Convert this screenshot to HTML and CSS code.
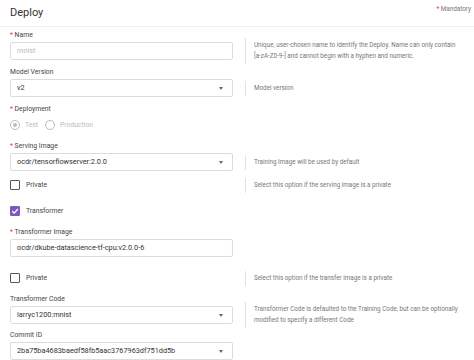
FILE: index.html
```html
<!DOCTYPE html>
<html lang="en">
<head>
  <meta charset="UTF-8">
  <title>Deploy</title>
  <link rel="stylesheet" href="styles.css">
</head>
<body>

<div class="header">
  <h1>Deploy</h1>
  <span class="mandatory"><span class="req">*</span> Mandatory</span>
</div>

<div class="form">

  <!-- Name -->
  <div class="field first">
    <label><span class="req">*</span> Name</label>
    <div class="row">
      <div class="control input placeholder">mnist</div>
      <div class="help">Unique, user-chosen name to identify the Deploy. Name can only contain [a-zA-Z0-9-] and cannot begin with a hyphen and numeric.</div>
    </div>
  </div>

  <!-- Model version -->
  <div class="field">
    <label>Model Version</label>
    <div class="row">
      <div class="control select">v2</div>
      <div class="help">Model version</div>
    </div>
  </div>

  <!-- Deployment type -->
  <div class="field">
    <label><span class="req">*</span> Deployment</label>
    <div class="radios">
      <span class="radio on"></span><span class="radio-text">Test</span>
      <span class="radio"></span><span class="radio-text">Production</span>
    </div>
  </div>

  <!-- Serving image -->
  <div class="field">
    <label><span class="req">*</span> Serving Image</label>
    <div class="row">
      <div class="control select">ocdr/tensorflowserver:2.0.0</div>
      <div class="help">Training Image will be used by default</div>
    </div>
  </div>

  <div class="check-row">
    <div class="control check-wrap"><span class="box"></span>Private</div>
    <div class="help">Select this option if the serving image is a private</div>
  </div>

  <div class="check-row">
    <div class="control check-wrap"><span class="box checked"><svg viewBox="0 0 10 10" width="10" height="10"><path d="M2.2 5.2 L4.2 7.1 L7.9 3" fill="none" stroke="#fff" stroke-width="1.3"/></svg></span>Transformer</div>
  </div>

  <!-- Transformer image -->
  <div class="field after-check">
    <label><span class="req">*</span> Transformer Image</label>
    <div class="row">
      <div class="control input">ocdr/dkube-datascience-tf-cpu:v2.0.0-6</div>
    </div>
  </div>

  <div class="check-row spaced">
    <div class="control check-wrap"><span class="box"></span>Private</div>
    <div class="help">Select this option if the transfer image is a private</div>
  </div>

  <!-- Transformer code -->
  <div class="field after-check">
    <label>Transformer Code</label>
    <div class="row">
      <div class="control select">larryc1200:mnist</div>
      <div class="help">Transformer Code is defaulted to the Training Code, but can be optionally modified to specify a different Code</div>
    </div>
  </div>

  <div class="field tight">
    <label>Commit ID</label>
    <div class="row">
      <div class="control select">2ba75ba4683baedf58fb5aac3767963df751dd5b</div>
    </div>
  </div>

</div>

</body>
</html>
```

FILE: styles.css
```css
html, body {
  margin: 0;
  padding: 0;
  background: #fff;
  font-family: Roboto, "Liberation Sans", sans-serif;
  color: #444;
  overflow: hidden;
}

.header {
  display: flex;
  justify-content: space-between;
  align-items: flex-start;
  height: 26px;
  padding: 0 3px 0 10px;
  border-bottom: 1px solid #efefef;
}

.header h1 {
  margin: 0;
  padding-top: 6px;
  font-size: 11px;
  font-weight: 400;
  line-height: 14px;
  color: #333;
}

.mandatory {
  font-size: 6.3px;
  line-height: 8px;
  padding-top: 5px;
  color: #777;
}

.req {
  color: #e53935;
}

.form {
  padding: 0 10px;
}

.field {
  margin-top: 8px;
}

.field.first {
  margin-top: 4px;
}

.field.after-check {
  margin-top: 5px;
}

.field.tight {
  margin-top: 7px;
}

label {
  display: block;
  font-size: 6.8px;
  line-height: 9px;
  margin-bottom: 2px;
  color: #444;
}

.row {
  display: flex;
  align-items: center;
  height: 18px;
}

.control {
  flex: none;
  width: 223px;
  box-sizing: border-box;
}

.input, .select {
  height: 18px;
  border: 1px solid #dcdcdc;
  border-radius: 2px;
  padding: 0 6px;
  font-size: 7.3px;
  line-height: 16px;
  color: #333;
  position: relative;
}

.placeholder {
  color: #bbb;
}

.select::after {
  content: "";
  position: absolute;
  right: 9px;
  top: 7px;
  border-left: 2.5px solid transparent;
  border-right: 2.5px solid transparent;
  border-top: 3px solid #666;
}

.help {
  margin-left: 12px;
  padding-left: 8px;
  border-left: 1px solid #e2e2e2;
  font-size: 6.3px;
  line-height: 11px;
  color: #777;
  width: 205px;
  padding-top: 2px;
  padding-bottom: 2px;
  white-space: normal;
}

.radios {
  display: flex;
  align-items: center;
  height: 18px;
  font-size: 6.8px;
  color: #bbb;
}

.radio {
  width: 10px;
  height: 10px;
  box-sizing: border-box;
  border: 1px solid #bbb;
  border-radius: 50%;
  position: relative;
}

.radio.on::after {
  content: "";
  position: absolute;
  left: 2px;
  top: 2px;
  width: 4px;
  height: 4px;
  border-radius: 50%;
  background: #bbb;
}

.radio-text {
  margin: 0 7px 0 5px;
}

.check-row {
  display: flex;
  align-items: center;
  height: 24px;
  margin-top: 2px;
}

.check-row.spaced {
  margin-top: 9px;
}

.check-wrap {
  display: flex;
  align-items: center;
  font-size: 6.8px;
  color: #444;
}

.box {
  width: 10px;
  height: 10px;
  box-sizing: border-box;
  border: 1.2px solid #555;
  border-radius: 1px;
  margin-right: 6px;
  display: flex;
}

.box.checked {
  background: #7e57c2;
  border-color: #7e57c2;
}

.box svg {
  margin: -1.2px;
}
```
